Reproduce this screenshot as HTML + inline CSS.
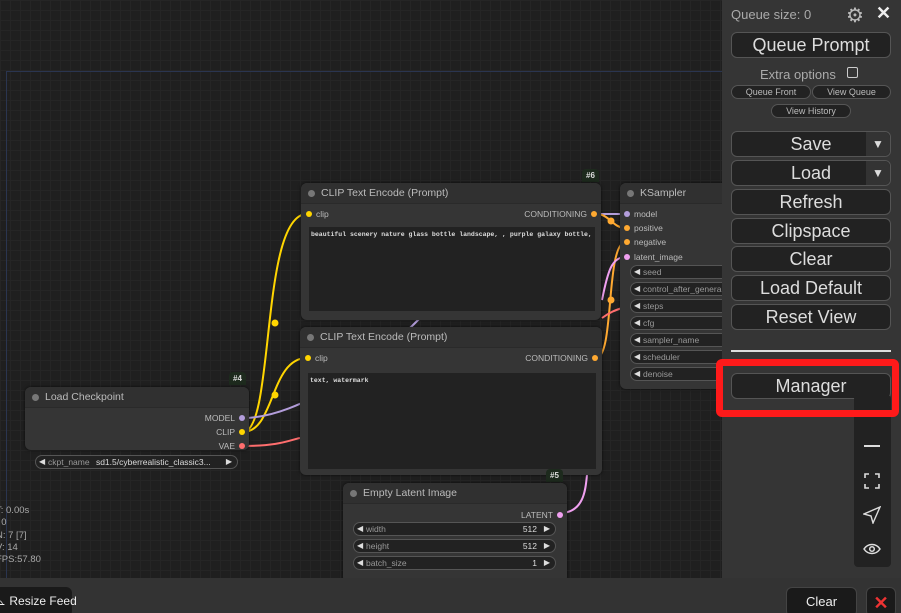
<!DOCTYPE html>
<html style="width:901px;height:613px;overflow:hidden"><head><meta charset="utf-8"><style>
*{box-sizing:border-box;margin:0;padding:0}
body{width:901px;height:613px;overflow:hidden;background:#202020;font-family:"Liberation Sans",sans-serif;position:relative;color:#ddd}
.grid{position:absolute;left:0;top:0;width:901px;height:613px;background-image:linear-gradient(#252525 1px,transparent 1px),linear-gradient(90deg,#252525 1px,transparent 1px);background-size:10px 10px;background-color:#1f1f1f}
.node{position:absolute;background:#353535;border-radius:6px;box-shadow:0 0 3px #000a}
.hdr{height:21px;background:#303030;border-radius:6px 6px 0 0;font-size:10.5px;color:#bbb;line-height:21px;padding-left:20px;position:relative;border-bottom:1px solid #2a2a2a}
.hdr:before{content:"";position:absolute;left:7px;top:7px;width:7px;height:7px;border-radius:50%;background:#777}
.t{position:absolute;font-size:8.5px;color:#bbb;white-space:nowrap}
.dot{position:absolute;width:6px;height:6px;border-radius:50%}
.ta{position:absolute;background:#222;font-family:"Liberation Mono",monospace;font-size:6.5px;color:#ddd;padding:4px 2px;font-weight:bold;white-space:nowrap;overflow:hidden}
.w{position:absolute;height:14px;border:1px solid #555;border-radius:8px;background:#222;font-size:8.5px;color:#999;line-height:12px;padding-left:12px;white-space:nowrap;overflow:hidden}
.w:before{content:"◀";position:absolute;left:3px;font-size:8px;color:#ddd}
.w .v{position:absolute;right:18px;color:#ddd}
.w .r{position:absolute;right:5px;color:#ddd;font-size:8px}
.badge{position:absolute;background:#1d2a1d;color:#ddd;font-size:8px;font-weight:bold;padding:2px 4px;border-radius:4px 4px 0 0}
.panel{position:absolute;left:722px;top:0;width:179px;height:578px;background:#353535}
.b{position:absolute;left:9px;width:160px;height:26px;border:1px solid #555;border-radius:6px;background:#222;color:#ddd;font-size:18px;text-align:center;line-height:24px;white-space:nowrap}
.sb{position:absolute;height:14px;border:1px solid #555;border-radius:7px;background:#222;color:#bbb;font-size:9px;text-align:center;line-height:12px;white-space:nowrap}
.arr{position:absolute;right:0;top:0;width:24px;height:24px;background:#333;border-radius:0 6px 6px 0;font-size:12px;line-height:24px}
</style></head><body>
<div class="grid"></div>
<div style="position:absolute;left:6px;top:71px;width:720px;height:1px;background:#2a3550"></div>
<div style="position:absolute;left:6px;top:71px;width:1px;height:507px;background:#2a3550"></div>

<svg style="position:absolute;left:0;top:0" width="901" height="613">
<g fill="none" stroke-width="2">
<path d="M243 432 C275 432 260 214 307 214" stroke="#ffd500"/>
<path d="M243 432 C275 432 270 358 307 358" stroke="#ffd500"/>
<path d="M243 418 C300 418 380 360 420 318" stroke="#b39ddb"/>
<path d="M243 446 C280 446 290 440 300 438" stroke="#ff6e6e"/>
<path d="M596 214 C610 214 612 214 626 214" stroke="#b39ddb"/>
<path d="M596 214 C610 214 612 228 626 228" stroke="#ffa931"/>
<path d="M596 358 C615 358 605 242 626 242" stroke="#ffa931"/>
<path d="M560 513 C590 513 585 475 588 470" stroke="#f0a0f0"/>
<path d="M602 300 C608 270 612 257 626 257" stroke="#f0a0f0"/>
<path d="M602 318 C610 312 616 310 622 308" stroke="#ff6e6e"/>
</g>
<g fill="#ffd500"><circle cx="275" cy="323" r="3.5"/><circle cx="275" cy="395" r="3.5"/></g>
<g fill="#ffa931"><circle cx="611" cy="221" r="3.5"/><circle cx="611" cy="300" r="3.5"/></g>
</svg>

<div class="badge" style="left:229px;top:372px">#4</div>
<div class="node" style="left:25px;top:387px;width:224px;height:63px">
<div class="hdr">Load Checkpoint</div>
<div class="t" style="right:14px;top:26px">MODEL</div><div class="dot" style="right:4px;top:28px;background:#b39ddb"></div>
<div class="t" style="right:14px;top:40px">CLIP</div><div class="dot" style="right:4px;top:42px;background:#ffd500"></div>
<div class="t" style="right:14px;top:54px">VAE</div><div class="dot" style="right:4px;top:56px;background:#ff6e6e"></div>
</div>
<div class="w" style="left:35px;top:455px;width:203px">ckpt_name <span style="color:#ddd;margin-left:4px">sd1.5/cyberrealistic_classic3...</span><span class="r">▶</span></div>

<div class="badge" style="left:582px;top:169px">#6</div>
<div class="node" style="left:301px;top:183px;width:300px;height:137px">
<div class="hdr">CLIP Text Encode (Prompt)</div>
<div class="dot" style="left:5px;top:28px;background:#ffd500"></div><div class="t" style="left:15px;top:26px">clip</div>
<div class="t" style="right:14px;top:26px">CONDITIONING</div><div class="dot" style="right:4px;top:28px;background:#ffa931"></div>
<div class="ta" style="left:8px;top:44px;width:286px;height:84px">beautiful scenery nature glass bottle landscape, , purple galaxy bottle,</div>
</div>

<div class="node" style="left:300px;top:327px;width:302px;height:148px">
<div class="hdr">CLIP Text Encode (Prompt)</div>
<div class="dot" style="left:5px;top:28px;background:#ffd500"></div><div class="t" style="left:15px;top:26px">clip</div>
<div class="t" style="right:14px;top:26px">CONDITIONING</div><div class="dot" style="right:4px;top:28px;background:#ffa931"></div>
<div class="ta" style="left:8px;top:46px;width:288px;height:96px">text, watermark</div>
</div>

<div class="node" style="left:620px;top:183px;width:110px;height:206px">
<div class="hdr">KSampler</div>
<div class="dot" style="left:4px;top:28px;background:#b39ddb"></div><div class="t" style="left:14px;top:26px">model</div>
<div class="dot" style="left:4px;top:42px;background:#ffa931"></div><div class="t" style="left:14px;top:40px">positive</div>
<div class="dot" style="left:4px;top:56px;background:#ffa931"></div><div class="t" style="left:14px;top:54px">negative</div>
<div class="dot" style="left:4px;top:71px;background:#f0a0f0"></div><div class="t" style="left:14px;top:69px">latent_image</div>
</div>
<div class="w" style="left:630px;top:265px;width:100px">seed</div>
<div class="w" style="left:630px;top:282px;width:100px">control_after_genera</div>
<div class="w" style="left:630px;top:299px;width:100px">steps</div>
<div class="w" style="left:630px;top:316px;width:100px">cfg</div>
<div class="w" style="left:630px;top:333px;width:100px">sampler_name</div>
<div class="w" style="left:630px;top:350px;width:100px">scheduler</div>
<div class="w" style="left:630px;top:367px;width:100px">denoise</div>

<div class="badge" style="left:546px;top:469px">#5</div>
<div class="node" style="left:343px;top:483px;width:224px;height:100px">
<div class="hdr">Empty Latent Image</div>
<div class="t" style="right:14px;top:27px">LATENT</div><div class="dot" style="right:4px;top:29px;background:#f0a0f0"></div>
</div>
<div class="w" style="left:353px;top:522px;width:203px">width<span class="v">512</span><span class="r">▶</span></div>
<div class="w" style="left:353px;top:539px;width:203px">height<span class="v">512</span><span class="r">▶</span></div>
<div class="w" style="left:353px;top:556px;width:203px">batch_size<span class="v">1</span><span class="r">▶</span></div>

<div style="position:absolute;left:-4px;top:505px;font-size:9.5px;color:#aaa;line-height:12.3px;white-space:nowrap">T: 0.00s<br>: 0<br>N: 7 [7]<br>V: 14<br>FPS:57.80</div>

<div style="position:absolute;left:0;top:578px;width:901px;height:35px;background:#333"></div>
<div style="position:absolute;left:-8px;top:587px;width:80px;height:30px;background:#1a1a1a;border-radius:6px"></div>
<div style="position:absolute;left:-4px;top:594px;color:#eee;font-size:12px;white-space:nowrap">⊾ Resize Feed</div>
<div style="position:absolute;left:786px;top:587px;width:71px;height:30px;background:#1a1a1a;border:1px solid #444;border-radius:6px;color:#eee;font-size:13px;text-align:center;line-height:28px">Clear</div>
<div style="position:absolute;left:866px;top:587px;width:30px;height:30px;background:#1a1a1a;border:1px solid #444;border-radius:6px;color:#e33;font-size:18px;text-align:center;line-height:30px;font-weight:bold">✕</div>

<div class="panel">
<div style="position:absolute;left:9px;top:7px;font-size:13px;color:#aaa">Queue size: 0</div>
<div style="position:absolute;left:124px;top:3px;font-size:20px;color:#bbb">⚙</div>
<div style="position:absolute;left:154px;top:3px;font-size:18px;color:#eee;font-weight:bold">✕</div>
<div class="b" style="top:32px">Queue Prompt</div>
<div style="position:absolute;left:38px;top:67px;font-size:13px;color:#aaa">Extra options</div>
<div style="position:absolute;left:125px;top:67px;width:11px;height:11px;border:1px solid #ccc;border-radius:2px"></div>
<div class="sb" style="left:9px;top:85px;width:80px">Queue Front</div>
<div class="sb" style="left:90px;top:85px;width:79px">View Queue</div>
<div class="sb" style="left:49px;top:104px;width:80px">View History</div>
<div class="b" style="top:131px">Save<div class="arr">▼</div></div>
<div class="b" style="top:160px">Load<div class="arr">▼</div></div>
<div class="b" style="top:189px">Refresh</div>
<div class="b" style="top:218px">Clipspace</div>
<div class="b" style="top:246px">Clear</div>
<div class="b" style="top:275px">Load Default</div>
<div class="b" style="top:304px">Reset View</div>
<div style="position:absolute;left:9px;top:350px;width:160px;height:2px;background:#ddd"></div>
<div class="b" style="top:373px">Manager</div>
<div style="position:absolute;left:132px;top:395px;width:37px;height:172px;background:#222;border-radius:4px;color:#ddd;text-align:center">
<div style="position:absolute;top:50px;left:10px;width:16px;height:2px;background:#ddd"></div>
<svg style="position:absolute;left:10px;top:78px" width="16" height="16" fill="none" stroke="#ddd" stroke-width="1.6"><path d="M1 5V1h4M11 1h4v4M15 11v4h-4M5 15H1v-4"/></svg>
<svg style="position:absolute;left:9px;top:111px" width="18" height="18" fill="none" stroke="#ddd" stroke-width="1.4"><path d="M17 1L1 8l7 2 2 7z"/></svg>
<svg style="position:absolute;left:9px;top:148px" width="18" height="12" fill="none" stroke="#ddd" stroke-width="1.5"><path d="M1 6C5 0 13 0 17 6C13 12 5 12 1 6z"/><circle cx="9" cy="6" r="2.3"/></svg>
</div>
<div style="position:absolute;left:-6px;top:359px;width:183px;height:58px;border:7px solid #ff1a1a;border-radius:6px"></div>
</div>
</body></html>
